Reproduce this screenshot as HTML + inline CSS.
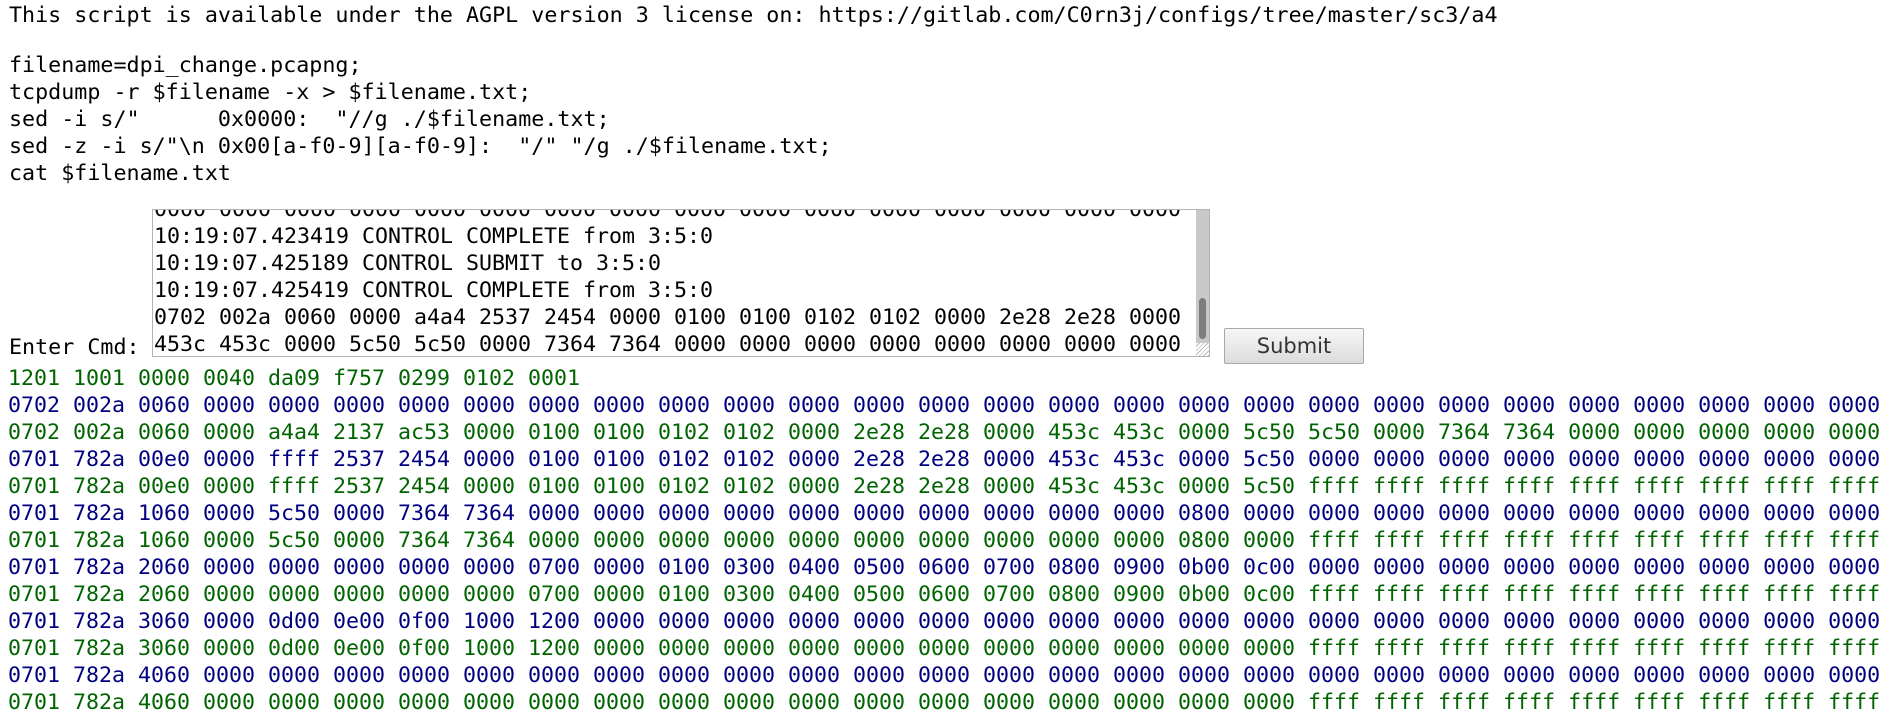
<!DOCTYPE html>
<html><head><meta charset="utf-8"><style>
*{margin:0;padding:0}
body{width:1889px;height:695px;overflow:hidden;background:#fff;font-family:"DejaVu Sans Mono","Liberation Mono",monospace;font-size:21.7px;line-height:27px;color:#000;position:relative}
.b{position:absolute;white-space:pre}
.g{color:#006400}.n{color:#000080}
#ta{position:absolute;left:152px;top:209px;width:1056px;height:146px;border:1px solid #b4b4b4;overflow:hidden;background:#fff;font-size:21.6px}
#ta .in{position:absolute;left:1px;top:-14px;white-space:pre}
#sb{position:absolute;right:0;top:0;width:13px;height:133px;background:#c8c8c8}
#th{position:absolute;left:3px;top:88px;width:7px;height:41px;background:#7d7d7d;border-radius:4px}
#rs{position:absolute;right:0;bottom:0;width:13px;height:13px;background:repeating-linear-gradient(135deg,#fff 0 2px,#bbb 2px 3px)}
#btn{position:absolute;left:1224px;top:328px;width:138px;height:34px;border:1px solid #a8a8a8;border-radius:2px;background:linear-gradient(#f6f6f6,#dcdcdc);font-family:"DejaVu Sans","Liberation Sans",sans-serif;font-size:21px;line-height:34px;text-align:center;color:#333}
</style></head><body>
<div class="b" style="left:9px;top:2px">This script is available under the AGPL version 3 license on: https://gitlab.com/C0rn3j/configs/tree/master/sc3/a4</div>
<div class="b" style="left:9px;top:52px">filename=dpi_change.pcapng;
tcpdump -r $filename -x &gt; $filename.txt;
sed -i s/"      0x0000:  "//g ./$filename.txt;
sed -z -i s/"\n 0x00[a-f0-9][a-f0-9]:  "/" "/g ./$filename.txt;
cat $filename.txt</div>
<div class="b" style="left:9px;top:334px">Enter Cmd:</div>
<div id="ta"><div class="in">0000 0000 0000 0000 0000 0000 0000 0000 0000 0000 0000 0000 0000 0000 0000 0000
10:19:07.423419 CONTROL COMPLETE from 3:5:0
10:19:07.425189 CONTROL SUBMIT to 3:5:0
10:19:07.425419 CONTROL COMPLETE from 3:5:0
0702 002a 0060 0000 a4a4 2537 2454 0000 0100 0100 0102 0102 0000 2e28 2e28 0000
453c 453c 0000 5c50 5c50 0000 7364 7364 0000 0000 0000 0000 0000 0000 0000 0000</div>
<div id="sb"><div id="th"></div></div><div id="rs"></div></div>
<div id="btn">Submit</div>
<div class="b" style="left:8px;top:365px;font-size:21.6px"><span class="g">1201 1001 0000 0040 da09 f757 0299 0102 0001</span>
<span class="n">0702 002a 0060 0000 0000 0000 0000 0000 0000 0000 0000 0000 0000 0000 0000 0000 0000 0000 0000 0000 0000 0000 0000 0000 0000 0000 0000 0000 0000</span>
<span class="g">0702 002a 0060 0000 a4a4 2137 ac53 0000 0100 0100 0102 0102 0000 2e28 2e28 0000 453c 453c 0000 5c50 5c50 0000 7364 7364 0000 0000 0000 0000 0000</span>
<span class="n">0701 782a 00e0 0000 ffff 2537 2454 0000 0100 0100 0102 0102 0000 2e28 2e28 0000 453c 453c 0000 5c50 0000 0000 0000 0000 0000 0000 0000 0000 0000</span>
<span class="g">0701 782a 00e0 0000 ffff 2537 2454 0000 0100 0100 0102 0102 0000 2e28 2e28 0000 453c 453c 0000 5c50 ffff ffff ffff ffff ffff ffff ffff ffff ffff</span>
<span class="n">0701 782a 1060 0000 5c50 0000 7364 7364 0000 0000 0000 0000 0000 0000 0000 0000 0000 0000 0800 0000 0000 0000 0000 0000 0000 0000 0000 0000 0000</span>
<span class="g">0701 782a 1060 0000 5c50 0000 7364 7364 0000 0000 0000 0000 0000 0000 0000 0000 0000 0000 0800 0000 ffff ffff ffff ffff ffff ffff ffff ffff ffff</span>
<span class="n">0701 782a 2060 0000 0000 0000 0000 0000 0700 0000 0100 0300 0400 0500 0600 0700 0800 0900 0b00 0c00 0000 0000 0000 0000 0000 0000 0000 0000 0000</span>
<span class="g">0701 782a 2060 0000 0000 0000 0000 0000 0700 0000 0100 0300 0400 0500 0600 0700 0800 0900 0b00 0c00 ffff ffff ffff ffff ffff ffff ffff ffff ffff</span>
<span class="n">0701 782a 3060 0000 0d00 0e00 0f00 1000 1200 0000 0000 0000 0000 0000 0000 0000 0000 0000 0000 0000 0000 0000 0000 0000 0000 0000 0000 0000 0000</span>
<span class="g">0701 782a 3060 0000 0d00 0e00 0f00 1000 1200 0000 0000 0000 0000 0000 0000 0000 0000 0000 0000 0000 ffff ffff ffff ffff ffff ffff ffff ffff ffff</span>
<span class="n">0701 782a 4060 0000 0000 0000 0000 0000 0000 0000 0000 0000 0000 0000 0000 0000 0000 0000 0000 0000 0000 0000 0000 0000 0000 0000 0000 0000 0000</span>
<span class="g">0701 782a 4060 0000 0000 0000 0000 0000 0000 0000 0000 0000 0000 0000 0000 0000 0000 0000 0000 0000 ffff ffff ffff ffff ffff ffff ffff ffff ffff</span></div>
</body></html>
